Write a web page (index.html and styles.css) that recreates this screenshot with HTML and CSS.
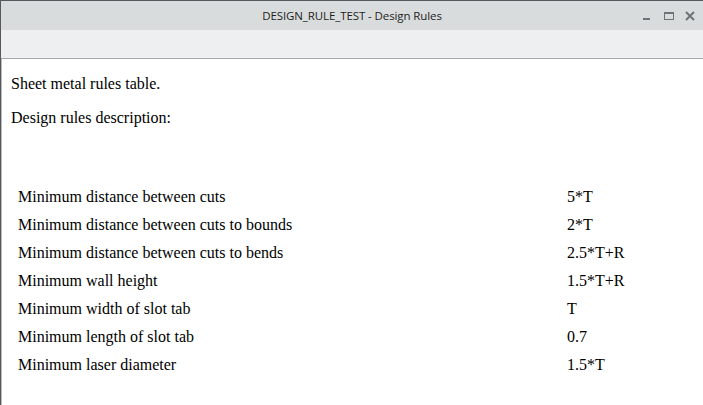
FILE: index.html
```html
<!DOCTYPE html>
<html>
<head>
<meta charset="utf-8">
<link rel="stylesheet" href="styles.css">
</head>
<body>
<div class="window">
  <div class="titlebar">
    <div class="title">DESIGN_RULE_TEST - Design Rules</div>
    <div class="controls">
      <svg class="ctl" width="12" height="12" viewBox="0 0 12 12"><rect x="1" y="8" width="7" height="2" fill="#6f7376"/></svg>
      <svg class="ctl" width="12" height="12" viewBox="0 0 12 12"><rect x="1.5" y="2.5" width="9" height="7" fill="none" stroke="#6f7376" stroke-width="1"/><rect x="1" y="2" width="10" height="2" fill="#6f7376"/></svg>
      <svg class="ctl" width="12" height="12" viewBox="0 0 12 12"><path d="M2 2 L10 10 M10 2 L2 10" stroke="#6f7376" stroke-width="2"/></svg>
    </div>
  </div>
  <div class="toolbar"></div>
  <div class="content">
    <p class="intro">Sheet metal rules table.</p>
    <p class="intro">Design rules description:</p>
    <table class="rules">
      <tr><td class="name">Minimum distance between cuts</td><td>5*T</td></tr>
      <tr><td class="name">Minimum distance between cuts to bounds</td><td>2*T</td></tr>
      <tr><td class="name">Minimum distance between cuts to bends</td><td>2.5*T+R</td></tr>
      <tr><td class="name">Minimum wall height</td><td>1.5*T+R</td></tr>
      <tr><td class="name">Minimum width of slot tab</td><td>T</td></tr>
      <tr><td class="name">Minimum length of slot tab</td><td>0.7</td></tr>
      <tr><td class="name">Minimum laser diameter</td><td>1.5*T</td></tr>
    </table>
  </div>
</div>
</body>
</html>
```
FILE: styles.css
```css
html, body {
  margin: 0;
  padding: 0;
  background: #ffffff;
  overflow: hidden;
}
.window {
  width: 703px;
  height: 405px;
  box-sizing: border-box;
  border-top: 1px solid #55595c;
  border-left: 1px solid #55595c;
  display: flex;
  flex-direction: column;
}
.titlebar {
  height: 29px;
  background: #d9dcdd;
  display: flex;
  align-items: center;
  justify-content: center;
  position: relative;
}
.title {
  font-family: "Open Sans", "Liberation Sans", sans-serif;
  font-size: 11.5px;
  color: #1e1e1e;
  letter-spacing: -0.1px;
}
.controls {
  position: absolute;
  right: 7px;
  top: 9px;
  display: flex;
  gap: 9px;
}
.ctl {
  display: block;
}
.toolbar {
  height: 28px;
  background: #eeeff0;
  border-bottom: 1px solid #a7aaad;
}
.content {
  flex: 1;
  background: #ffffff;
  border-left: 1px solid #b9bcbe;
  padding: 16px 0 0 9px;
  font-family: "Liberation Serif", "Times New Roman", serif;
  font-size: 16px;
  color: #000;
}
.intro {
  margin: 0 0 16px 0;
  line-height: 18px;
}
.rules {
  border-collapse: collapse;
  margin-top: 56px;
  margin-left: 7px;
}
.rules td {
  padding: 0;
  height: 28px;
  line-height: 18px;
  vertical-align: middle;
}
.rules td.name {
  width: 549px;
}
```
